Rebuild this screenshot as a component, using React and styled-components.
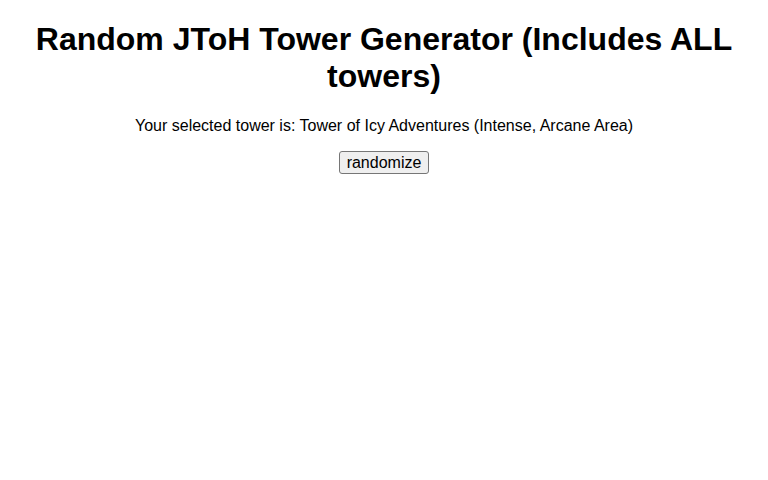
import React, { useState } from "react";
import styled, { createGlobalStyle } from "styled-components";

const GlobalStyle = createGlobalStyle`
  body {
    margin: 0;
    background: #fff;
    font-family: "Liberation Sans", Arial, sans-serif;
    color: #000;
  }
`;

const Container = styled.div`
  text-align: center;
`;

const Title = styled.h1`
  font-size: 32px;
  font-weight: bold;
  margin: 21.44px 20px;
`;

const Selected = styled.p`
  font-size: 16px;
  margin: 16px 0;
`;

const Button = styled.button`
  font-family: "Liberation Sans", Arial, sans-serif;
  font-size: 16px;
  line-height: 19px;
  color: #000;
  padding: 1px 7px;
  background: #efefef;
  border: 1px solid #767676;
  border-radius: 3px;
  cursor: pointer;
`;

const towers = [
  "Tower of Icy Adventures (Intense, Arcane Area)",
  "Tower of Annoyingly Simple Trials (Easy, Ring 1)",
  "Tower of True Skill (Hard, Ring 2)",
  "Tower of Keyboard Yeeting (Challenging, Ring 3)",
];

const App = () => {
  const [tower, setTower] = useState(towers[0]);

  const handleClick = () => {
    setTower(towers[Math.floor(Math.random() * towers.length)]);
  };

  return (
    <Container>
      <GlobalStyle />
      <Title>Random JToH Tower Generator (Includes ALL towers)</Title>
      <Selected>Your selected tower is: {tower}</Selected>
      <Button onClick={handleClick}>randomize</Button>
    </Container>
  );
};

export default App;
